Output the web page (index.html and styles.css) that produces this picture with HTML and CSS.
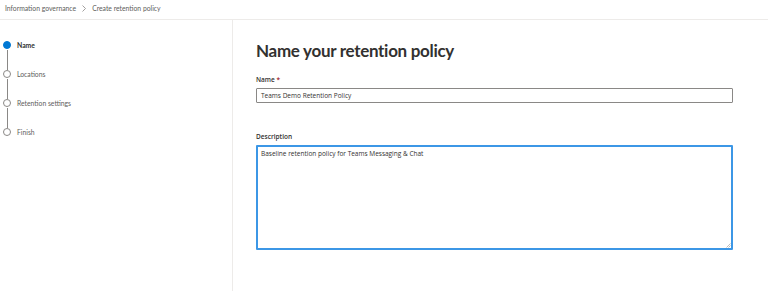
FILE: index.html
```html
<!DOCTYPE html>
<html>
<head>
<meta charset="utf-8">
<link rel="stylesheet" href="styles.css">
</head>
<body>
<div class="page">
  <header class="crumbs">
    <span>Information governance</span>
    <svg class="chev" width="6" height="7" viewBox="0 0 6 7"><path d="M1.5 0.5 L4.5 3.5 L1.5 6.5" fill="none" stroke="#8a8886" stroke-width="0.8"/></svg>
    <span>Create retention policy</span>
  </header>
  <div class="body">
    <nav class="steps">
      <div class="step active"><span class="dot"></span><span class="label">Name</span></div>
      <div class="line"></div>
      <div class="step"><span class="dot"></span><span class="label">Locations</span></div>
      <div class="line"></div>
      <div class="step"><span class="dot"></span><span class="label">Retention settings</span></div>
      <div class="line"></div>
      <div class="step"><span class="dot"></span><span class="label">Finish</span></div>
    </nav>
    <main class="main">
      <h1 class="title">Name your retention policy</h1>
      <label class="field-label">Name <span class="req">*</span></label>
      <div class="input">Teams Demo Retention Policy</div>
      <label class="field-label desc-label">Description</label>
      <div class="textarea">Baseline retention policy for Teams Messaging &amp; Chat
        <svg class="grip" width="5" height="5" viewBox="0 0 5 5"><path d="M4.5 0.5 L0.5 4.5 M4.5 2.5 L2.5 4.5" stroke="#a0a0a0" stroke-width="0.7"/></svg>
      </div>
    </main>
  </div>
</div>
</body>
</html>
```
FILE: styles.css
```css
* { box-sizing: border-box; }
html, body { margin: 0; padding: 0; background: #fff; }
body { font-family: "Open Sans", "Noto Sans", sans-serif; color: #323130; }
.page { width: 768px; height: 291px; display: flex; flex-direction: column; overflow: hidden; }
.crumbs {
  height: 20px; border-bottom: 1px solid #edebe9;
  display: flex; align-items: center; gap: 4px;
  padding: 0 0 3px 5px; font-family: Lato, "Open Sans", sans-serif; font-size: 6.8px; color: #605e5c;
}
.chev { margin: 0 1px; }
.body { flex: 1; display: flex; }
.steps {
  width: 233px; border-right: 1px solid #edebe9;
  padding: 20.5px 0 0 3px; display: flex; flex-direction: column;
}
.step { display: flex; align-items: center; gap: 6px; height: 9px; font-family: Lato, "Open Sans", sans-serif; font-size: 6.8px; color: #605e5c; }
.dot { width: 8px; height: 8px; border-radius: 50%; border: 1px solid #8a8886; background: #fff; flex: none; }
.step.active .dot { background: #0078d4; border-color: #0078d4; }
.step.active .label { font-weight: 700; color: #323130; }
.line { width: 1px; height: 20px; background: #8a8886; margin-left: 3.5px; }
.main { flex: 1; padding: 19px 35px 0 23px; display: flex; flex-direction: column; }
.title { margin: 0; font-family: Lato, "Open Sans", sans-serif; font-size: 17px; font-weight: 700; letter-spacing: -0.3px; color: #323130; line-height: 24px; }
.field-label { font-size: 6.5px; font-weight: 600; color: #323130; margin-top: 12px; line-height: 9px; }
.req { color: #a4262c; }
.input {
  margin-top: 4px; height: 15px; border: 1px solid #8a8886; border-radius: 1px;
  font-size: 6.5px; padding: 0 4px; display: flex; align-items: center; color: #323130;
}
.desc-label { margin-top: 29px; }
.textarea {
  position: relative; margin-top: 4px; height: 105px; border: 2px solid #3c97e6; border-radius: 1px;
  font-size: 6.5px; padding: 2px 3px; color: #323130;
}
.grip { position: absolute; right: 0; bottom: 0; }
```
